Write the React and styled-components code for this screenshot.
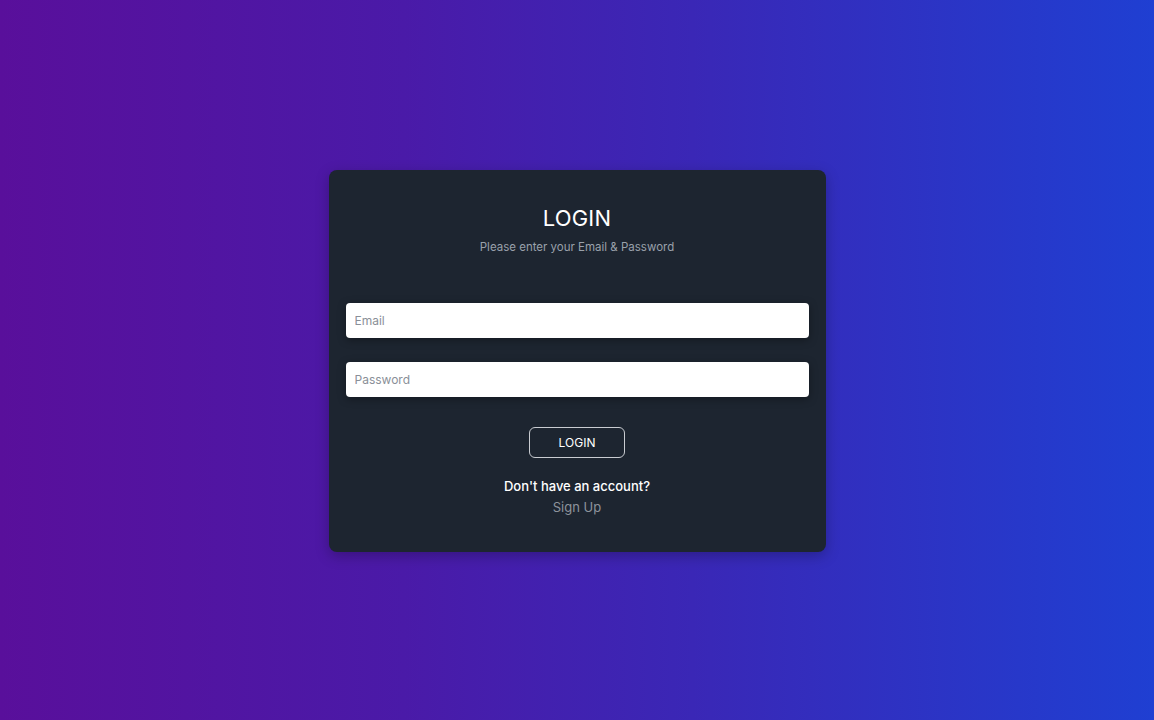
import React from 'react';
import styled, { createGlobalStyle } from 'styled-components';

const GlobalStyle = createGlobalStyle`
  * { box-sizing: border-box; }
  html, body {
    margin: 0;
    padding: 0;
    font-family: Inter, "Noto Sans", sans-serif;
  }
`;

const Page = styled.div`
  min-height: 100vh;
  padding-top: 2px;
  display: flex;
  align-items: center;
  justify-content: center;
  background: linear-gradient(to right, #590f9b, #4a1aa8 35%, #3a27b6 60%, #1f3fd2);
`;

const Card = styled.div`
  width: 497px;
  background: #1d2530;
  border-radius: 8px;
  padding: 34px 17px 36px;
  display: flex;
  flex-direction: column;
  align-items: center;
  box-shadow: 0 4px 14px rgba(0, 0, 0, 0.25);
`;

const Title = styled.h1`
  margin: 0;
  font-size: 22px;
  line-height: 28px;
  font-weight: 400;
  color: #ffffff;
  letter-spacing: 0.2px;
`;

const Subtitle = styled.p`
  margin: 6px 0 0;
  font-size: 11.5px;
  line-height: 18px;
  color: #9aa1ab;
`;

const Form = styled.form`
  width: 100%;
  margin-top: 47px;
  display: flex;
  flex-direction: column;
  align-items: center;
`;

const Input = styled.input`
  width: 100%;
  height: 35px;
  border: none;
  border-radius: 4px;
  padding: 0 9px;
  font-family: inherit;
  font-size: 12px;
  color: #222;
  background: #ffffff;
  box-shadow: 0 2px 8px rgba(0, 0, 0, 0.35);
  outline: none;
  margin-bottom: ${p => p.$gap}px;

  &::placeholder {
    color: #8a8f98;
  }
`;

const Button = styled.button`
  width: 96px;
  height: 31px;
  border: 1px solid #c9ccd1;
  border-radius: 6px;
  background: transparent;
  color: #ffffff;
  font-family: inherit;
  font-size: 12px;
  cursor: pointer;
`;

const Prompt = styled.p`
  margin: 18px 0 0;
  font-size: 13px;
  line-height: 20px;
  font-weight: 500;
  color: #ffffff;
`;

const SignUp = styled.a`
  margin-top: 2px;
  font-size: 13px;
  line-height: 18px;
  color: #8d939c;
  text-decoration: none;
  cursor: text;
`;

export default function App() {
  return (
    <>
      <GlobalStyle />
      <Page>
        <Card>
          <Title>LOGIN</Title>
          <Subtitle>Please enter your Email &amp; Password</Subtitle>
          <Form onSubmit={e => e.preventDefault()}>
            <Input type="email" placeholder="Email" $gap={24} />
            <Input type="password" placeholder="Password" $gap={30} />
            <Button type="submit">LOGIN</Button>
          </Form>
          <Prompt>Don't have an account?</Prompt>
          <SignUp href="#">Sign Up</SignUp>
        </Card>
      </Page>
    </>
  );
}
